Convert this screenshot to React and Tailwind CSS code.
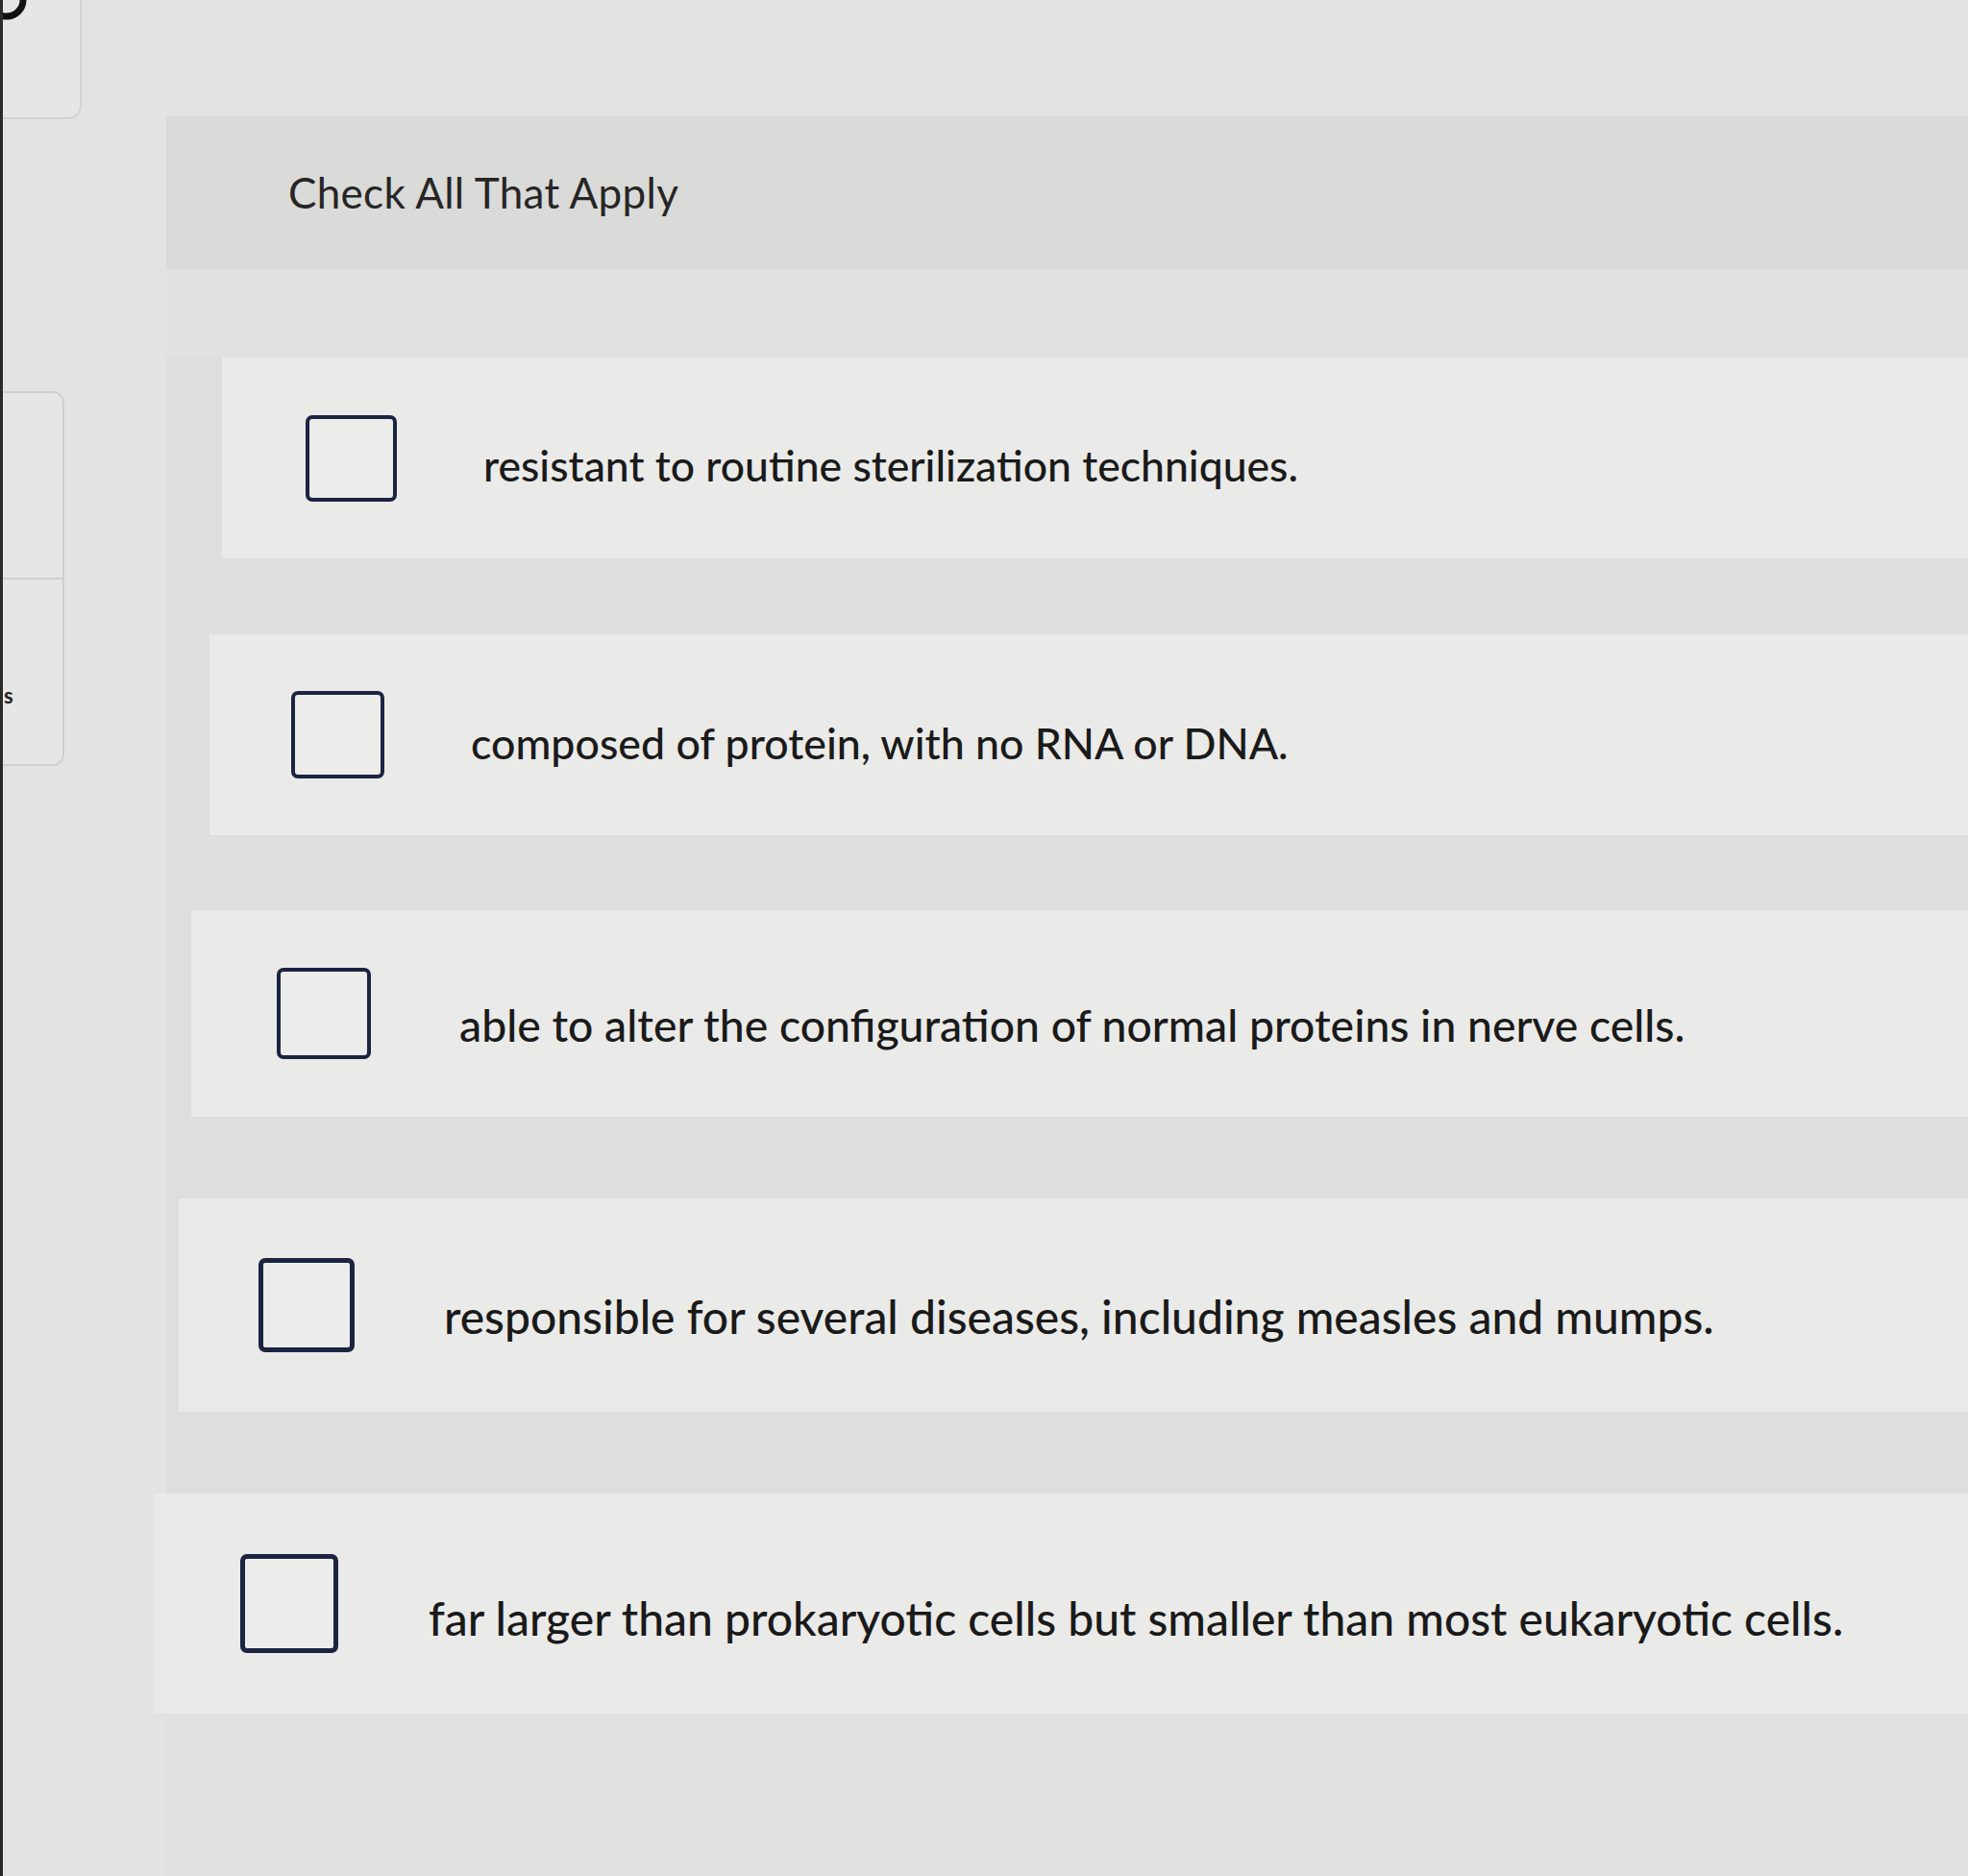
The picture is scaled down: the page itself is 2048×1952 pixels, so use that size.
import React from "react";

const rows = [
  {
    text: "resistant to routine sterilization techniques.",
    row: "ml-[58px] h-[209px] mt-[0px]",
    box: "ml-[87px] w-[95px] h-[90px] border-[4px]",
    txt: "ml-[90px] mt-[16px] text-[44.5px]",
  },
  {
    text: "composed of protein, with no RNA or DNA.",
    row: "ml-[45px] h-[209px] mt-[79px]",
    box: "ml-[85px] w-[97px] h-[91px] border-[4px]",
    txt: "ml-[90px] mt-[18px] text-[44.7px]",
  },
  {
    text: "able to alter the configuration of normal proteins in nerve cells.",
    row: "ml-[26px] h-[215px] mt-[78px]",
    box: "ml-[89px] w-[98px] h-[95px] border-[4px]",
    txt: "ml-[92px] mt-[24px] text-[46.3px]",
  },
  {
    text: "responsible for several diseases, including measles and mumps.",
    row: "ml-[13px] h-[222px] mt-[85px]",
    box: "ml-[83px] w-[100px] h-[98px] border-[5px]",
    txt: "ml-[93px] mt-[24px] text-[48px]",
  },
  {
    text: "far larger than prokaryotic cells but smaller than most eukaryotic cells.",
    row: "ml-[-13px] h-[229px] mt-[85px]",
    box: "ml-[90px] w-[102px] h-[103px] border-[5px]",
    txt: "ml-[94px] mt-[30px] text-[48px]",
  },
];

export default function App() {
  return (
    <div
      className="w-[2048px] h-[1952px] bg-[#e3e3e1] flex overflow-hidden border-l-[3px] border-[#2a2a2a]"
      style={{ fontFamily: "Lato, 'Open Sans', 'Liberation Sans', sans-serif" }}
    >
      {/* left sidebar */}
      <div className="w-[82px] shrink-0 flex flex-col">
        <div className="relative h-[124px] bg-[#e6e6e4] border-r-2 border-b-2 border-[#d2d2d0] rounded-br-[14px] overflow-hidden">
          <svg className="absolute -left-[18px] -top-[22px]" width="44" height="44" viewBox="0 0 44 44">
            <circle cx="22" cy="22" r="17" fill="none" stroke="#111" strokeWidth="7" />
          </svg>
        </div>
        <div className="mt-[283px] w-[64px] h-[390px] bg-[#e6e6e4] border-r-2 border-t-2 border-b-2 border-[#d0d0ce] rounded-r-[12px] flex flex-col">
          <div className="h-[194px] border-b-2 border-[#d0d0ce]" />
          <div className="flex-1 flex items-start pt-[110px]">
            <span className="text-[22px] leading-none font-bold text-[#222] ml-[1px]">s</span>
          </div>
        </div>
      </div>

      {/* main panel */}
      <div className="flex-1 ml-[88px] mt-[120px] bg-[#dededc] flex flex-col">
        <div className="h-[160px] bg-[#dadad8] flex items-center">
          <h1 className="ml-[127px] mt-[0px] text-[44px] text-[#262626] font-normal tracking-[0.3px]">
            Check All That Apply
          </h1>
        </div>
        <div className="h-[92px] bg-[#e1e1df]" />
        {rows.map((r, i) => (
          <div key={i} className={`${r.row} bg-[#eaeae8] flex items-center`}>
            <div className={`${r.box} shrink-0 border-[#1c2442] rounded-[7px] bg-[#ececea]`} />
            <span className={`${r.txt} text-[#1a1a1a] font-medium whitespace-nowrap`}>
              {r.text}
            </span>
          </div>
        ))}
        <div className="flex-1 bg-[#e0e0de]" />
      </div>
    </div>
  );
}
